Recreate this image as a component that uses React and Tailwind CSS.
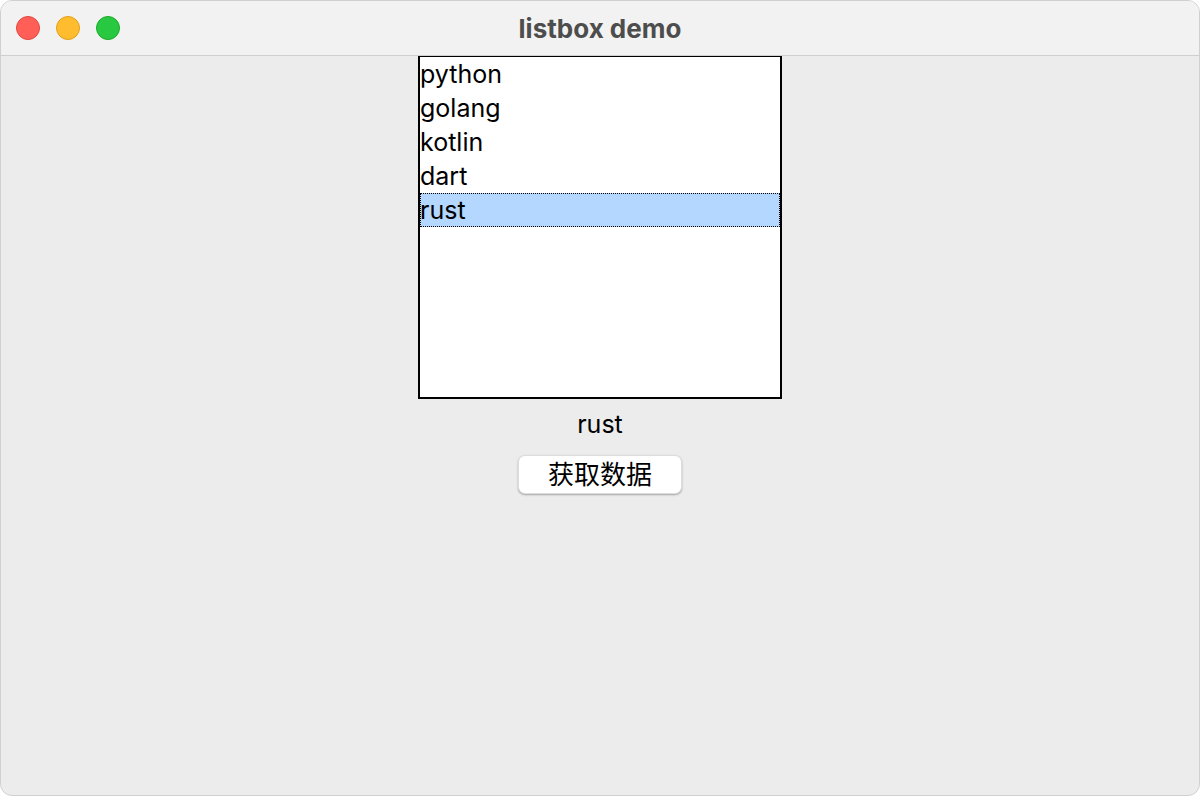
import React from 'react';

const items = ['python', 'golang', 'kotlin', 'dart', 'rust'];

export default function App() {
  const selected = 4;
  return (
    <div className="w-[1200px] h-[796px] bg-white">
      <div className="w-full h-full rounded-[12px] overflow-hidden bg-[#ececec] flex flex-col border border-[#d0d0d0]" style={{ fontFamily: 'Inter, "Noto Sans CJK SC", sans-serif' }}>
        {/* title bar */}
        <div className="h-[55px] shrink-0 bg-[#f2f2f2] border-b border-[#cfcfcf] flex items-center relative">
          <div className="flex items-center gap-[16px] pl-[15px]">
            <span className="w-[24px] h-[24px] rounded-full bg-[#ff5f57] border border-[#e2463f]" />
            <span className="w-[24px] h-[24px] rounded-full bg-[#febc2e] border border-[#e1a116]" />
            <span className="w-[24px] h-[24px] rounded-full bg-[#28c840] border border-[#1aab29]" />
          </div>
          <div className="absolute inset-0 flex items-center justify-center text-[26px] font-bold text-[#4d4d4d]">listbox demo</div>
        </div>

        {/* body */}
        <div className="flex flex-col items-center">
          <div className="w-[364px] h-[344px] bg-white border-2 border-black -mt-px">
            {items.map((it, i) => (
              <div
                key={it}
                className={`h-[34px] leading-[32px] text-[25px] text-black ${i === selected ? 'bg-[#b3d7ff] border border-dotted border-black' : 'border border-transparent'}`}
              >
                <span className="-ml-px">{it}</span>
              </div>
            ))}
          </div>
          <div className="mt-[10px] text-[25px] text-black leading-[30px]">rust</div>
          <button className="mt-[16px] w-[164px] h-[39px] bg-white rounded-[7px] shadow-[0_1px_2px_rgba(0,0,0,0.3)] border border-[#dcdcdc] text-[26px] text-black flex items-center justify-center">
            获取数据
          </button>
        </div>
      </div>
    </div>
  );
}
